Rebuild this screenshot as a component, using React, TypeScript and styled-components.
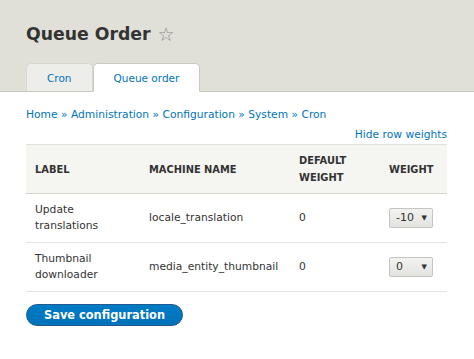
import styled, { createGlobalStyle } from "styled-components";

const GlobalStyle = createGlobalStyle`
    html, body {
        margin: 0;
        padding: 0;
        background: #fff;
    }
    body {
        font-family: "DejaVu Sans", Verdana, sans-serif;
        color: #333;
        width: 474px;
        height: 359px;
        overflow: hidden;
    }
`;

const Header = styled.header`
    background: #e0e0d8;
    border-bottom: 1px solid #c9c9c1;
    padding: 23px 26px 0;
    box-sizing: border-box;
    height: 92px;
    display: flex;
    flex-direction: column;
    justify-content: space-between;
`;

const Title = styled.h1`
    margin: 0;
    font-size: 17.3px;
    font-weight: bold;
    line-height: 22px;
    color: #333;
    display: flex;
    align-items: center;
    gap: 7px;
`;

const Star = styled.span`
    color: #8a8a86;
    font-weight: normal;
    font-size: 19px;
`;

const Tabs = styled.nav`
    display: flex;
    margin-bottom: -1px;
`;

const Tab = styled.a<{ $active?: boolean }>`
    display: block;
    padding: 0 20px;
    height: 29px;
    line-height: 28px;
    font-size: 10.5px;
    color: #0074bd;
    text-decoration: none;
    background: ${(p) => (p.$active ? "#fff" : "#ededea")};
    border: 1px solid ${(p) => (p.$active ? "#c9c9c1" : "#d8d8d0")};
    border-bottom: ${(p) => (p.$active ? "1px solid #fff" : "1px solid #c9c9c1")};
    border-radius: 5px 5px 0 0;
    box-sizing: border-box;
`;

const Main = styled.main`
    padding: 15px 27px 0 26px;
`;

const Breadcrumb = styled.div`
    font-size: 10.7px;
    line-height: 15px;
    color: #0074bd;
`;

const WeightToggle = styled.div`
    text-align: right;
    font-size: 10.7px;
    line-height: 15px;
    color: #0074bd;
    margin-top: 5px;
    margin-bottom: 2px;
`;

const Table = styled.table`
    width: 421px;
    border-collapse: collapse;
    table-layout: fixed;
    font-size: 10.7px;
`;

const Th = styled.th<{ $w: number }>`
    width: ${(p) => p.$w}px;
    box-sizing: border-box;
    text-align: left;
    font-size: 9.9px;
    font-weight: bold;
    text-transform: uppercase;
    line-height: 17px;
    padding: 0 0 0 9px;
    height: 49px;
    background: #f5f5f2;
    border-top: 1px solid #e0e0d8;
    border-bottom: 1px solid #d5d5cf;
    color: #333;
`;

const Td = styled.td`
    padding: 0 0 0 9px;
    height: 48px;
    line-height: 16px;
    color: #333;
    border-bottom: 1px solid #e6e4df;
`;

const Select = styled.div`
    display: inline-flex;
    align-items: center;
    justify-content: space-between;
    width: 44px;
    height: 20px;
    box-sizing: border-box;
    padding: 0 5px 0 6px;
    border: 1px solid #c4c4c4;
    border-radius: 2px;
    background: linear-gradient(#f2f2f0, #e3e3e0);
    font-size: 11px;
    color: #333;
`;

const Arrow = styled.span`
    font-size: 7px;
    color: #333;
`;

const SaveButton = styled.button`
    margin-top: 12px;
    height: 22px;
    width: 157px;
    border: 1px solid #1e5c90;
    border-radius: 20px;
    background: linear-gradient(#007bc6, #0071b8);
    color: #fff;
    font-family: "DejaVu Sans", Verdana, sans-serif;
    font-weight: bold;
    font-size: 11.4px;
    padding: 0;
`;

const rows = [
    { label: "Update translations", machine: "locale_translation", def: "0", weight: "-10" },
    { label: "Thumbnail downloader", machine: "media_entity_thumbnail", def: "0", weight: "0" },
];

export default function App() {
    return (
        <>
            <GlobalStyle />
            <Header>
                <Title>
                    Queue Order <Star>☆</Star>
                </Title>
                <Tabs>
                    <Tab>Cron</Tab>
                    <Tab $active>Queue order</Tab>
                </Tabs>
            </Header>
            <Main>
                <Breadcrumb>
                    Home » Administration » Configuration » System » Cron
                </Breadcrumb>
                <WeightToggle>Hide row weights</WeightToggle>
                <Table>
                    <thead>
                        <tr>
                            <Th $w={114}>Label</Th>
                            <Th $w={150}>Machine name</Th>
                            <Th $w={90}>Default weight</Th>
                            <Th $w={67}>Weight</Th>
                        </tr>
                    </thead>
                    <tbody>
                        {rows.map((r) => (
                            <tr key={r.machine}>
                                <Td>{r.label}</Td>
                                <Td>{r.machine}</Td>
                                <Td>{r.def}</Td>
                                <Td>
                                    <Select>
                                        {r.weight}
                                        <Arrow>▼</Arrow>
                                    </Select>
                                </Td>
                            </tr>
                        ))}
                    </tbody>
                </Table>
                <SaveButton>Save configuration</SaveButton>
            </Main>
        </>
    );
}
